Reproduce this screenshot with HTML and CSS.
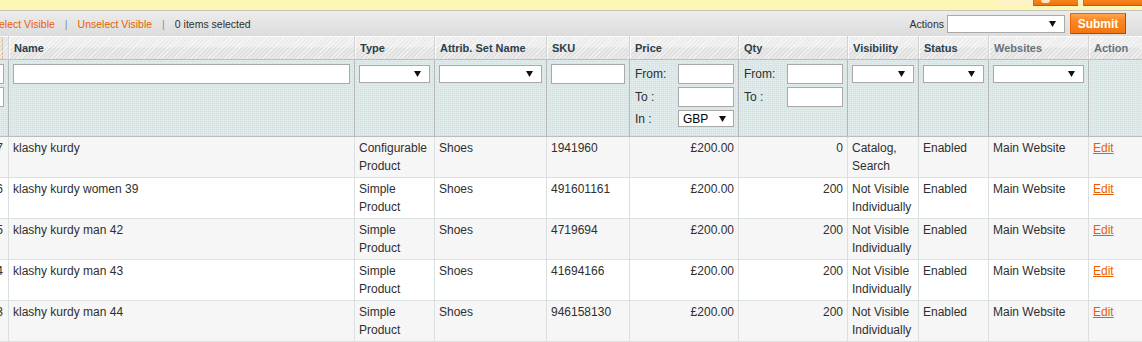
FILE: index.html
```html
<!DOCTYPE html>
<html lang="en">
<head>
<meta charset="utf-8">
<title>Manage Products</title>
<link rel="stylesheet" href="styles.css">
</head>
<body>
<div class="notice">
  <div class="notice-tabs">
    <span class="tab-pale"></span>
    <span class="tab-btn first"><span class="tab-dot"></span></span>
    <span class="tab-gap"></span>
    <span class="tab-btn second"></span>
  </div>
</div>

<div class="massaction">
  <div class="mass-left">
    <a class="mass-link" href="#">Select Visible</a>
    <span class="sep">|</span>
    <a class="mass-link" href="#">Unselect Visible</a>
    <span class="sep">|</span>
    <span class="count">0 items selected</span>
  </div>
  <div class="mass-right">
    <span class="mass-label">Actions</span>
    <span class="sel actions-sel"><span class="sel-val"></span><svg class="arr" width="7" height="6" viewBox="0 0 7 6"><path d="M0 0H7L3.5 6Z"/></svg></span>
    <button class="submit" type="button">Submit</button>
  </div>
</div>

<table class="grid">
  <colgroup>
    <col class="c-id"><col class="c-name"><col class="c-type"><col class="c-set"><col class="c-sku"><col class="c-price"><col class="c-qty"><col class="c-vis"><col class="c-status"><col class="c-web"><col class="c-action">
  </colgroup>
  <thead>
    <tr class="headings">
      <th class="sorted"></th>
      <th>Name</th>
      <th>Type</th>
      <th>Attrib. Set Name</th>
      <th>SKU</th>
      <th>Price</th>
      <th>Qty</th>
      <th>Visibility</th>
      <th>Status</th>
      <th class="plain">Websites</th>
      <th class="plain">Action</th>
    </tr>
    <tr class="filter">
      <th>
        <div class="range-line end"><input class="inp short" type="text"></div>
        <div class="range-line end"><input class="inp short" type="text"></div>
      </th>
      <th><input class="inp" type="text"></th>
      <th><span class="sel"><span class="sel-val"></span><svg class="arr" width="7" height="6" viewBox="0 0 7 6"><path d="M0 0H7L3.5 6Z"/></svg></span></th>
      <th><span class="sel"><span class="sel-val"></span><svg class="arr" width="7" height="6" viewBox="0 0 7 6"><path d="M0 0H7L3.5 6Z"/></svg></span></th>
      <th><input class="inp" type="text"></th>
      <th>
        <div class="range-line"><span class="range-label">From:</span><input class="inp short" type="text"></div>
        <div class="range-line"><span class="range-label">To :</span><input class="inp short" type="text"></div>
        <div class="range-line"><span class="range-label">In :</span><span class="sel short"><span class="sel-val">GBP</span><svg class="arr" width="7" height="6" viewBox="0 0 7 6"><path d="M0 0H7L3.5 6Z"/></svg></span></div>
      </th>
      <th>
        <div class="range-line"><span class="range-label">From:</span><input class="inp short" type="text"></div>
        <div class="range-line"><span class="range-label">To :</span><input class="inp short" type="text"></div>
      </th>
      <th><span class="sel"><span class="sel-val"></span><svg class="arr" width="7" height="6" viewBox="0 0 7 6"><path d="M0 0H7L3.5 6Z"/></svg></span></th>
      <th><span class="sel"><span class="sel-val"></span><svg class="arr" width="7" height="6" viewBox="0 0 7 6"><path d="M0 0H7L3.5 6Z"/></svg></span></th>
      <th><span class="sel"><span class="sel-val"></span><svg class="arr" width="7" height="6" viewBox="0 0 7 6"><path d="M0 0H7L3.5 6Z"/></svg></span></th>
      <th></th>
    </tr>
  </thead>
  <tbody>
    <tr class="row even">
      <td class="id">1947</td>
      <td>klashy kurdy</td>
      <td>Configurable Product</td>
      <td>Shoes</td>
      <td>1941960</td>
      <td class="num">£200.00</td>
      <td class="num">0</td>
      <td>Catalog, Search</td>
      <td>Enabled</td>
      <td>Main Website</td>
      <td><a class="edit" href="#">Edit</a></td>
    </tr>
    <tr class="row">
      <td class="id">1946</td>
      <td>klashy kurdy women 39</td>
      <td>Simple Product</td>
      <td>Shoes</td>
      <td>491601161</td>
      <td class="num">£200.00</td>
      <td class="num">200</td>
      <td>Not Visible Individually</td>
      <td>Enabled</td>
      <td>Main Website</td>
      <td><a class="edit" href="#">Edit</a></td>
    </tr>
    <tr class="row even">
      <td class="id">1945</td>
      <td>klashy kurdy man 42</td>
      <td>Simple Product</td>
      <td>Shoes</td>
      <td>4719694</td>
      <td class="num">£200.00</td>
      <td class="num">200</td>
      <td>Not Visible Individually</td>
      <td>Enabled</td>
      <td>Main Website</td>
      <td><a class="edit" href="#">Edit</a></td>
    </tr>
    <tr class="row">
      <td class="id">1944</td>
      <td>klashy kurdy man 43</td>
      <td>Simple Product</td>
      <td>Shoes</td>
      <td>41694166</td>
      <td class="num">£200.00</td>
      <td class="num">200</td>
      <td>Not Visible Individually</td>
      <td>Enabled</td>
      <td>Main Website</td>
      <td><a class="edit" href="#">Edit</a></td>
    </tr>
    <tr class="row even">
      <td class="id">1943</td>
      <td>klashy kurdy man 44</td>
      <td>Simple Product</td>
      <td>Shoes</td>
      <td>946158130</td>
      <td class="num">£200.00</td>
      <td class="num">200</td>
      <td>Not Visible Individually</td>
      <td>Enabled</td>
      <td>Main Website</td>
      <td><a class="edit" href="#">Edit</a></td>
    </tr>
  </tbody>
</table>
</body>
</html>
```
FILE: styles.css
```css
* { box-sizing: border-box; }
html, body { margin: 0; padding: 0; }
body {
  width: 1142px;
  height: 342px;
  overflow: hidden;
  background: #fff;
  font-family: "Liberation Sans", Arial, Helvetica, sans-serif;
  font-size: 12px;
  color: #2f2f2f;
}

/* yellow notice strip */
.notice {
  height: 11px;
  background: #fcf7b4;
  border-bottom: 1px solid #c4c4b8;
  display: flex;
  justify-content: flex-end;
  align-items: flex-start;
}
.notice-tabs { display: flex; align-items: flex-start; }
.tab-pale { width: 36px; height: 6px; background: #fdf2c6; }
.tab-gap { width: 5px; height: 6px; background: #fdf2c6; }
.tab-btn {
  height: 6px;
  background: linear-gradient(#f7841f, #f0720c);
  border-bottom: 1px solid #c85c02;
  border-left: 1px solid #e06a06;
  display: flex;
  align-items: flex-start;
}
.tab-btn.first { width: 45px; }
.tab-btn.second { width: 59px; }
.tab-dot {
  width: 9px;
  height: 3px;
  margin-left: 7px;
  background: #fde3c8;
  border-radius: 0 0 5px 5px;
}

/* mass action bar */
.massaction {
  height: 25px;
  display: flex;
  align-items: center;
  justify-content: space-between;
  padding-right: 16px;
  background: linear-gradient(#ececec, #dcdcdc);
  font-size: 10.5px;
}
.mass-left {
  display: flex;
  align-items: center;
  gap: 10px;
  margin-left: -8px;
}
.mass-link { color: #eb5e00; text-decoration: none; }
.sep { color: #7d8fa3; }
.count { color: #2f2f2f; }
.mass-right { display: flex; align-items: center; }
.mass-label { color: #2f2f2f; margin-right: 3px; }
.actions-sel { width: 118px; margin-top: 0; padding-right: 7px; }
.submit {
  margin-left: 5px;
  width: 56px;
  height: 21px;
  padding: 0;
  border: 1px solid;
  border-color: #ed6502 #b04a00 #b04a00 #ed6502;
  background: linear-gradient(#ffa650 0, #fb8a24 30%, #f47511 100%);
  color: #fff;
  font: bold 12px "Liberation Sans", Arial, sans-serif;
}

/* select look-alike */
.sel {
  display: flex;
  align-items: center;
  justify-content: space-between;
  height: 18px;
  margin-top: 1px;
  padding: 0 8px 0 4px;
  background: #fff;
  border: 1px solid #a9a9a9;
  font-size: 12px;
  color: #000;
}
.sel.short { width: 56px; margin-top: 0; height: 17px; padding-right: 7px; }
.arr { display: block; flex: none; fill: #111; }

.inp {
  display: block;
  width: 100%;
  height: 20px;
  margin: 0;
  padding: 0 2px;
  background: #fff;
  border: 1px solid #a9a9a9;
  font: 12px "Liberation Sans", Arial, sans-serif;
}
.inp.short { width: 56px; }

/* grid */
.grid {
  border-collapse: separate;
  border-spacing: 0;
  table-layout: fixed;
  width: 1249px;
  margin-left: -102px;
}
.c-id { width: 111px; }
.c-name { width: 346px; }
.c-type { width: 80px; }
.c-set { width: 112px; }
.c-sku { width: 83px; }
.c-price { width: 109px; }
.c-qty { width: 109px; }
.c-vis { width: 71px; }
.c-status { width: 70px; }
.c-web { width: 100px; }
.c-action { width: 58px; }

.headings th {
  height: 24px;
  padding: 0 5px;
  text-align: left;
  vertical-align: middle;
  white-space: nowrap;
  font-size: 11px;
  font-weight: bold;
  color: #2b3f4a;
  background-color: #e4e4e4;
  background-image:
    repeating-linear-gradient(135deg, rgba(255,255,255,.55) 0 1px, rgba(255,255,255,0) 1px 3px),
    linear-gradient(#ececec 0, #ececec 48%, #e1e1e1 52%, #e1e1e1 100%);
  border-right: 1px solid #d3d1d1;
  border-bottom: 1px solid #bdbdbd;
  box-shadow: inset 1px 1px 0 #fafafa;
}
.headings th.plain { color: #67737a; }
.headings th.sorted {
  background-image:
    repeating-linear-gradient(135deg, rgba(255,255,255,.55) 0 1px, rgba(255,255,255,0) 1px 3px),
    linear-gradient(to right, #f7dcb8 0, #f7dcb8 calc(100% - 6px), #bfbfbf calc(100% - 6px), #bfbfbf calc(100% - 5px), #e4e4e4 calc(100% - 5px));
}

.filter th {
  height: 77px;
  padding: 4px 4px 0;
  vertical-align: top;
  text-align: left;
  font-weight: normal;
  background-color: #d4e1e3;
  background-image:
    linear-gradient(90deg, rgba(255,255,255,.22) 1px, transparent 1px),
    linear-gradient(rgba(255,255,255,.22) 1px, transparent 1px);
  background-size: 2px 2px;
  border-right: 1px solid #b6b8b8;
  border-bottom: 1px solid #bcbcbc;
}
.range-line {
  display: flex;
  align-items: center;
  justify-content: space-between;
  margin-bottom: 3px;
}
.range-line.end { justify-content: flex-end; }
.range-line .sel.short { margin-top: 0; }
.range-label { padding-left: 1px; font-size: 12px; color: #2f2f2f; }

.row td {
  padding: 2px 4px;
  vertical-align: top;
  line-height: 18px;
  background: #fff;
  border-right: 1px solid #dadfe0;
  border-bottom: 1px solid #dadfe0;
}
.row.even td { background: #f6f6f6; }
.row td.num { text-align: right; }
.row td.id { text-align: right; padding-right: 5px; }
.edit { color: #eb5e00; text-decoration: underline; }
```
